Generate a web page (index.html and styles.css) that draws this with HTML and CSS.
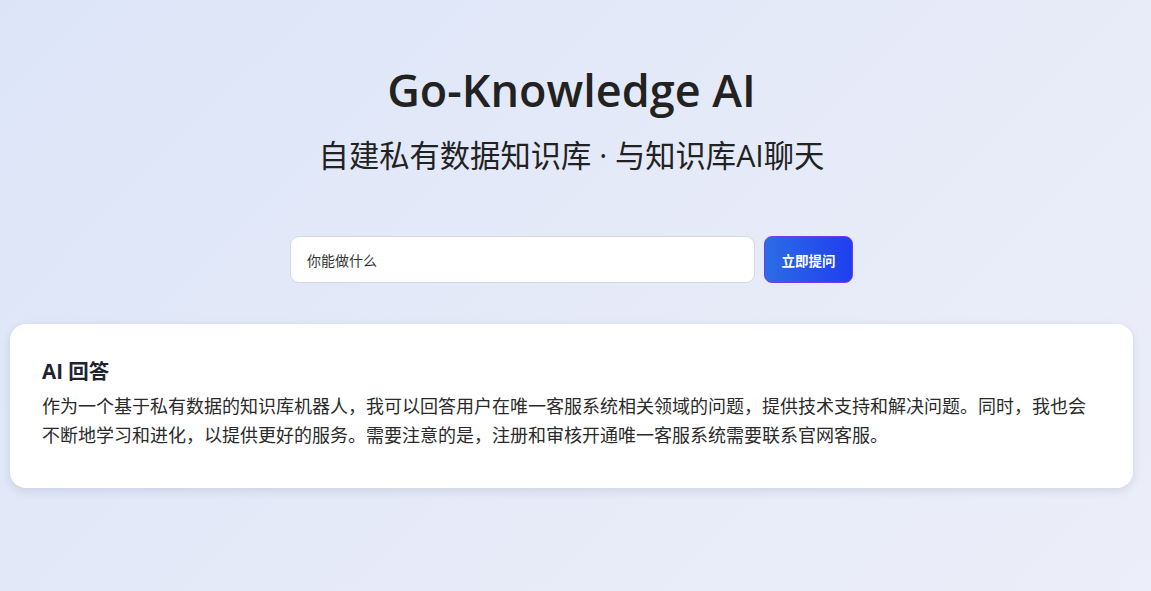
FILE: index.html
```html
<!DOCTYPE html>
<html lang="zh-CN">
<head>
<meta charset="utf-8">
<title>Go-Knowledge AI</title>
<link rel="stylesheet" href="styles.css">
</head>
<body>
<main class="page">
  <header class="hero">
    <h1 class="hero-title">Go-Knowledge AI</h1>
    <p class="hero-sub">自建私有数据知识库 · 与知识库AI聊天</p>
  </header>
  <form class="ask" onsubmit="return false;">
    <input class="ask-input" type="text" value="你能做什么">
    <button class="ask-btn" type="submit">立即提问</button>
  </form>
  <section class="answer">
    <h2 class="answer-title">AI 回答</h2>
    <p class="answer-text">作为一个基于私有数据的知识库机器人，我可以回答用户在唯一客服系统相关领域的问题，提供技术支持和解决问题。同时，我也会不断地学习和进化，以提供更好的服务。需要注意的是，注册和审核开通唯一客服系统需要联系官网客服。</p>
  </section>
</main>
</body>
</html>
```

FILE: styles.css
```css
* { box-sizing: border-box; }
html, body { height: 100%; }
body {
  margin: 0;
  background: linear-gradient(135deg, #dce5f8 0%, #e5eaf8 50%, #eceef9 100%);
  font-family: "Open Sans", "Noto Sans CJK SC", sans-serif;
  color: #222;
}
.page {
  width: 1123px;
  margin-left: 10px;
  padding-top: 62px;
}
.hero { text-align: center; }
.hero-title {
  margin: 0;
  font-size: 45px;
  line-height: 56px;
  font-weight: 600;
  color: #222;
}
.hero-sub {
  margin: 18px 0 0;
  font-family: "Open Sans", "Noto Sans CJK SC", sans-serif;
  font-size: 30.3px;
  line-height: 40px;
  font-weight: 400;
  color: #222;
}
.ask {
  display: flex;
  justify-content: center;
  gap: 9px;
  margin-top: 60px;
}
.ask-input {
  width: 465px;
  height: 47px;
  border: 1px solid #d3d7df;
  border-radius: 9px;
  background: #fff;
  padding: 0 16px;
  font-family: "Noto Sans CJK SC", sans-serif;
  font-size: 14px;
  color: #333;
  outline: none;
}
.ask-btn {
  width: 89px;
  height: 47px;
  border: 1px solid #6a3df2;
  border-radius: 8px;
  background: linear-gradient(to right, #2c6ce6, #1f3fef);
  color: #fff;
  font-family: "Noto Sans CJK SC", sans-serif;
  font-size: 13.5px;
  font-weight: 700;
  padding: 0;
}
.answer {
  margin-top: 41px;
  background: #fff;
  border-radius: 16px;
  padding: 32px 32px 32px;
  box-shadow: 0 3px 10px rgba(60, 70, 100, 0.14);
}
.answer-title {
  margin: 0 0 5px;
  font-family: "Open Sans", "Noto Sans CJK SC", sans-serif;
  font-size: 20.5px;
  line-height: 30px;
  font-weight: 700;
  color: #1f2330;
}
.answer-text {
  margin: 0 0 7px;
  font-family: "Noto Sans CJK SC", sans-serif;
  font-size: 18px;
  line-height: 28.8px;
  color: #2a2a2a;
}
```
